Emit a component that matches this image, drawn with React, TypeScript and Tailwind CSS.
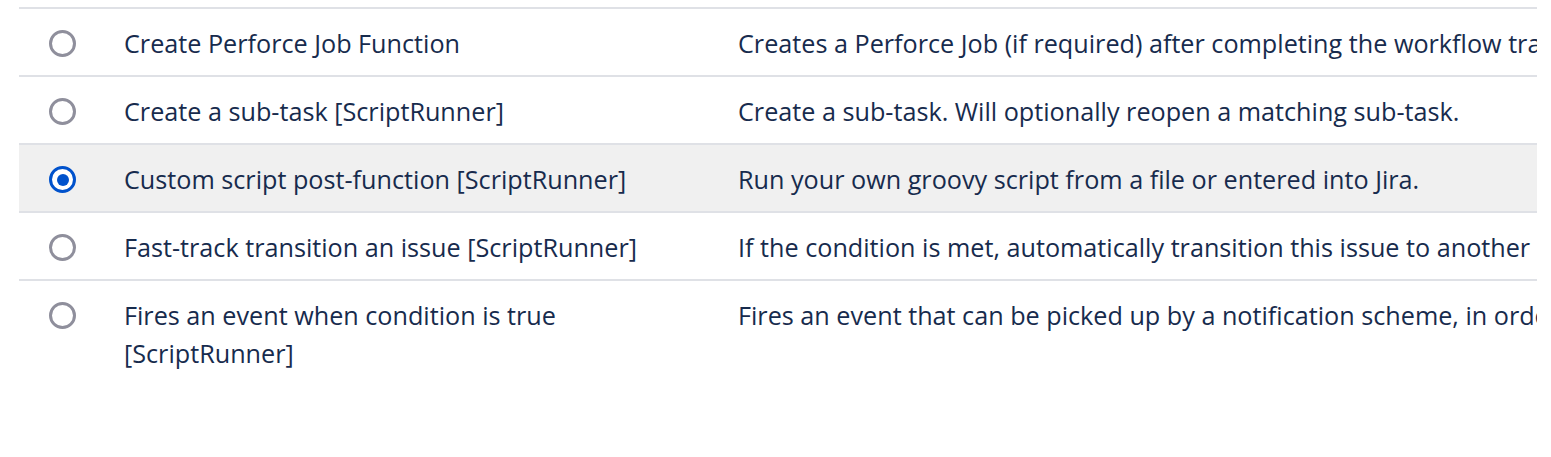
import React from 'react';

type Row = { name: string; desc: string; selected?: boolean };

const ROWS: Row[] = [
  { name: 'Create Perforce Job Function', desc: 'Creates a Perforce Job (if required) after completing the workflow transition' },
  { name: 'Create a sub-task [ScriptRunner]', desc: 'Create a sub-task. Will optionally reopen a matching sub-task.' },
  { name: 'Custom script post-function [ScriptRunner]', desc: 'Run your own groovy script from a file or entered into Jira.', selected: true },
  { name: 'Fast-track transition an issue [ScriptRunner]', desc: 'If the condition is met, automatically transition this issue to another status' },
  { name: 'Fires an event when condition is true [ScriptRunner]', desc: 'Fires an event that can be picked up by a notification scheme, in order to send an email' },
];

const Radio: React.FC<{ checked?: boolean }> = ({ checked }) =>
  checked ? (
    <span className="w-[27px] h-[27px] rounded-full border-[3px] border-[#0052cc] bg-white flex items-center justify-center">
      <span className="w-[12px] h-[12px] rounded-full bg-[#0052cc]" />
    </span>
  ) : (
    <span className="block w-[27px] h-[27px] rounded-full border-[3px] border-[#8f8f9c] bg-white" />
  );

export default function App() {
  return (
    <div className="w-[1551px] h-[457px] bg-white pt-[7px] pl-[19px] overflow-hidden" style={{ fontFamily: '"Open Sans", "Noto Sans", sans-serif' }}>
      <div className="w-[1518px] overflow-hidden border-t-2 border-[#dfe1e6]">
        {ROWS.map((r, i) => (
          <div
            key={r.name}
            className={`flex text-[25.2px] leading-[38px] text-[#172b4d] ${i < ROWS.length - 1 ? 'border-b-2 border-[#dfe1e6]' : ''} ${r.selected ? 'bg-[#f0f0f0]' : ''}`}
          >
            <div className="w-[105px] shrink-0 pl-[30px] pt-[21px] pb-[18px]">
              <Radio checked={r.selected} />
            </div>
            <div className="w-[614px] shrink-0 pr-[90px] pt-[15px] pb-[13px]">{r.name}</div>
            <div className="flex-1 min-w-0 whitespace-nowrap overflow-hidden pt-[15px] pb-[13px]">{r.desc}</div>
          </div>
        ))}
      </div>
    </div>
  );
}
